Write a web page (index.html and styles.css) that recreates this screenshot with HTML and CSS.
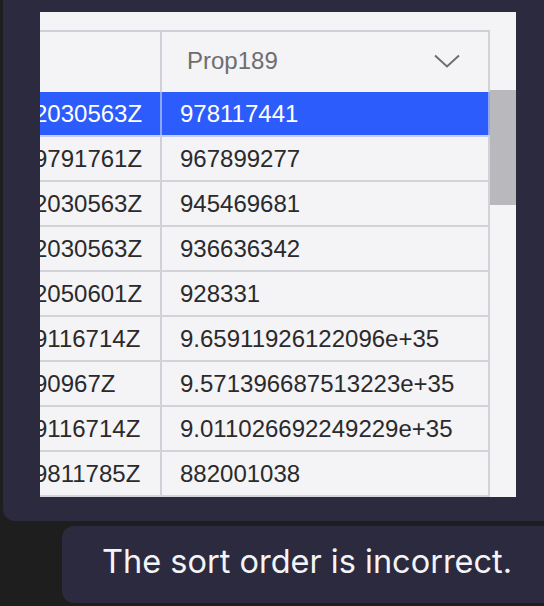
FILE: index.html
```html
<!DOCTYPE html>
<html lang="en">
<head>
    <meta charset="UTF-8">
    <meta name="viewport" content="width=device-width, initial-scale=1.0">
    <title>Sort order report</title>
    <link rel="stylesheet" href="styles.css">
</head>
<body>
    <div class="panel">
        <div class="shot">
            <div class="grid">
                <div class="head">
                    <div class="cell first"></div>
                    <div class="cell prop">
                        <span>Prop189</span>
                        <svg class="chevron" width="26" height="14" viewBox="0 0 26 14">
                            <path d="M1 1.5 L13 12.5 L25 1.5" fill="none" stroke="#6e6e70" stroke-width="2"/>
                        </svg>
                    </div>
                </div>

                <div class="row selected">
                    <div class="cell first">2030563Z</div>
                    <div class="cell">978117441</div>
                </div>
                <div class="row">
                    <div class="cell first">9791761Z</div>
                    <div class="cell">967899277</div>
                </div>
                <div class="row">
                    <div class="cell first">2030563Z</div>
                    <div class="cell">945469681</div>
                </div>
                <div class="row">
                    <div class="cell first">2030563Z</div>
                    <div class="cell">936636342</div>
                </div>
                <div class="row">
                    <div class="cell first">2050601Z</div>
                    <div class="cell">928331</div>
                </div>
                <div class="row">
                    <div class="cell first">9116714Z</div>
                    <div class="cell">9.65911926122096e+35</div>
                </div>
                <div class="row">
                    <div class="cell first">90967Z</div>
                    <div class="cell">9.571396687513223e+35</div>
                </div>
                <div class="row">
                    <div class="cell first">9116714Z</div>
                    <div class="cell">9.011026692249229e+35</div>
                </div>
                <div class="row">
                    <div class="cell first">9811785Z</div>
                    <div class="cell">882001038</div>
                </div>
            </div>
            <div class="scroll">
                <div class="thumb"></div>
            </div>
        </div>
    </div>

    <div class="caption">The sort order is incorrect.</div>
</body>
</html>
```

FILE: styles.css
```css
body {
    margin: 0;
    background: #1e1e1f;
    height: 606px;
    overflow: hidden;
}

.panel {
    margin-left: 3px;
    height: 521px;
    box-sizing: border-box;
    padding: 12px 0 0 37px;
    background: #2b2a3f;
    border-bottom-left-radius: 12px;
}

.shot {
    display: flex;
    width: 476px;
    height: 485px;
    overflow: hidden;
    background: #f4f3f5;
    font-family: 'Liberation Sans', Arial, sans-serif;
    font-size: 24px;
    color: #2a2a2c;
}

.grid {
    flex: none;
    width: 458px;
    margin-left: -8px;
}

.head,
.row {
    display: grid;
    grid-template-columns: 130px 328px;
}

.head {
    height: 62px;
    margin-top: 18px;
    border-top: 2px solid #cfcfd7;
    box-sizing: border-box;
}

.row {
    height: 45px;
    border-bottom: 2px solid #d2d2d9;
    box-sizing: border-box;
}

.cell {
    display: flex;
    align-items: center;
    padding-left: 18px;
    border-right: 2px solid #d2d2d9;
    white-space: nowrap;
    overflow: hidden;
}

.cell.first {
    padding-left: 2px;
    border-right-color: #d0d0d8;
}

.head .cell {
    height: 60px;
}

.prop {
    justify-content: space-between;
    padding-left: 25px;
    padding-right: 28px;
    padding-bottom: 3px;
    box-sizing: border-box;
    color: #6e6e70;
}

.row.selected {
    background: #2c5cfb;
    color: #ffffff;
    border-bottom-color: #c4cdf0;
}

.row.selected .cell {
    border-right-color: #8ea6f5;
}

.scroll {
    flex: none;
    width: 18px;
    padding-top: 78px;
}

.thumb {
    width: 26px;
    height: 115px;
    background: #b9b9bd;
}

.caption {
    display: flex;
    align-items: center;
    height: 77px;
    margin: 5px 0 0 62px;
    padding: 0 0 7px 40px;
    box-sizing: border-box;
    background: #2b2a3f;
    border-radius: 12px 0 0 12px;
    font-family: Inter, 'Noto Sans', sans-serif;
    font-size: 32.5px;
    color: #f4f4f6;
}
```
